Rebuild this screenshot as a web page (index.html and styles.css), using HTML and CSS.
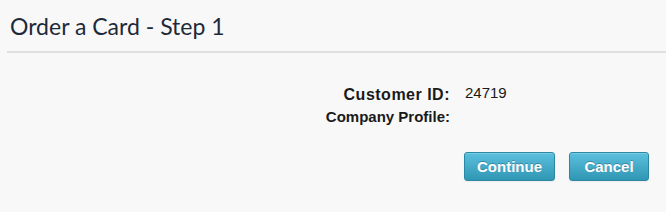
FILE: index.html
```html
<!DOCTYPE html>
<html>
<head>
<meta charset="utf-8">
<link rel="stylesheet" href="styles.css">
</head>
<body>
<div class="page">
  <h1 class="title">Order a Card - Step 1</h1>
  <div class="form">
    <div class="label label-id">Customer ID:</div>
    <div class="value">24719</div>
    <div class="label">Company Profile:</div>
    <div class="value"></div>
  </div>
  <div class="actions">
    <button class="btn btn-continue">Continue</button>
    <button class="btn btn-cancel">Cancel</button>
  </div>
</div>
</body>
</html>
```

FILE: styles.css
```css
html, body {
  margin: 0;
  padding: 0;
  background: #f8f8f8;
  width: 666px;
  height: 212px;
  overflow: hidden;
}
.page {
  padding-left: 7px;
}
.title {
  margin: 0;
  padding: 12px 0 11px 3px;
  font-family: Lato, "Open Sans", sans-serif;
  font-weight: normal;
  font-size: 23px;
  line-height: 28px;
  color: #1e2a38;
  border-bottom: 2px solid #e0e0e0;
}
.form {
  display: grid;
  grid-template-columns: 443px auto;
  column-gap: 15px;
  margin-top: 31px;
  font-family: "Liberation Sans", Arial, sans-serif;
  color: #1a1a1a;
}
.label {
  text-align: right;
  font-weight: bold;
  font-size: 15px;
  line-height: 22px;
}
.label-id {
  font-size: 16px;
  letter-spacing: 0.5px;
}
.value {
  font-size: 15px;
  line-height: 18px;
}
.actions {
  display: flex;
  justify-content: flex-end;
  gap: 14px;
  padding-right: 17px;
  margin-top: 24px;
}
.btn {
  height: 29px;
  border: 1px solid #2a88a5;
  border-radius: 3px;
  background: linear-gradient(to bottom, #5bc0de, #2f96b4);
  color: #fff;
  font-family: "Liberation Sans", Arial, sans-serif;
  font-weight: bold;
  font-size: 15px;
  text-shadow: 0 -1px 0 rgba(0,0,0,0.25);
  box-shadow: inset 0 1px 0 rgba(255,255,255,0.2), 0 1px 2px rgba(0,0,0,0.05);
  padding: 0;
}
.btn-continue { width: 91px; }
.btn-cancel { width: 80px; }
```
